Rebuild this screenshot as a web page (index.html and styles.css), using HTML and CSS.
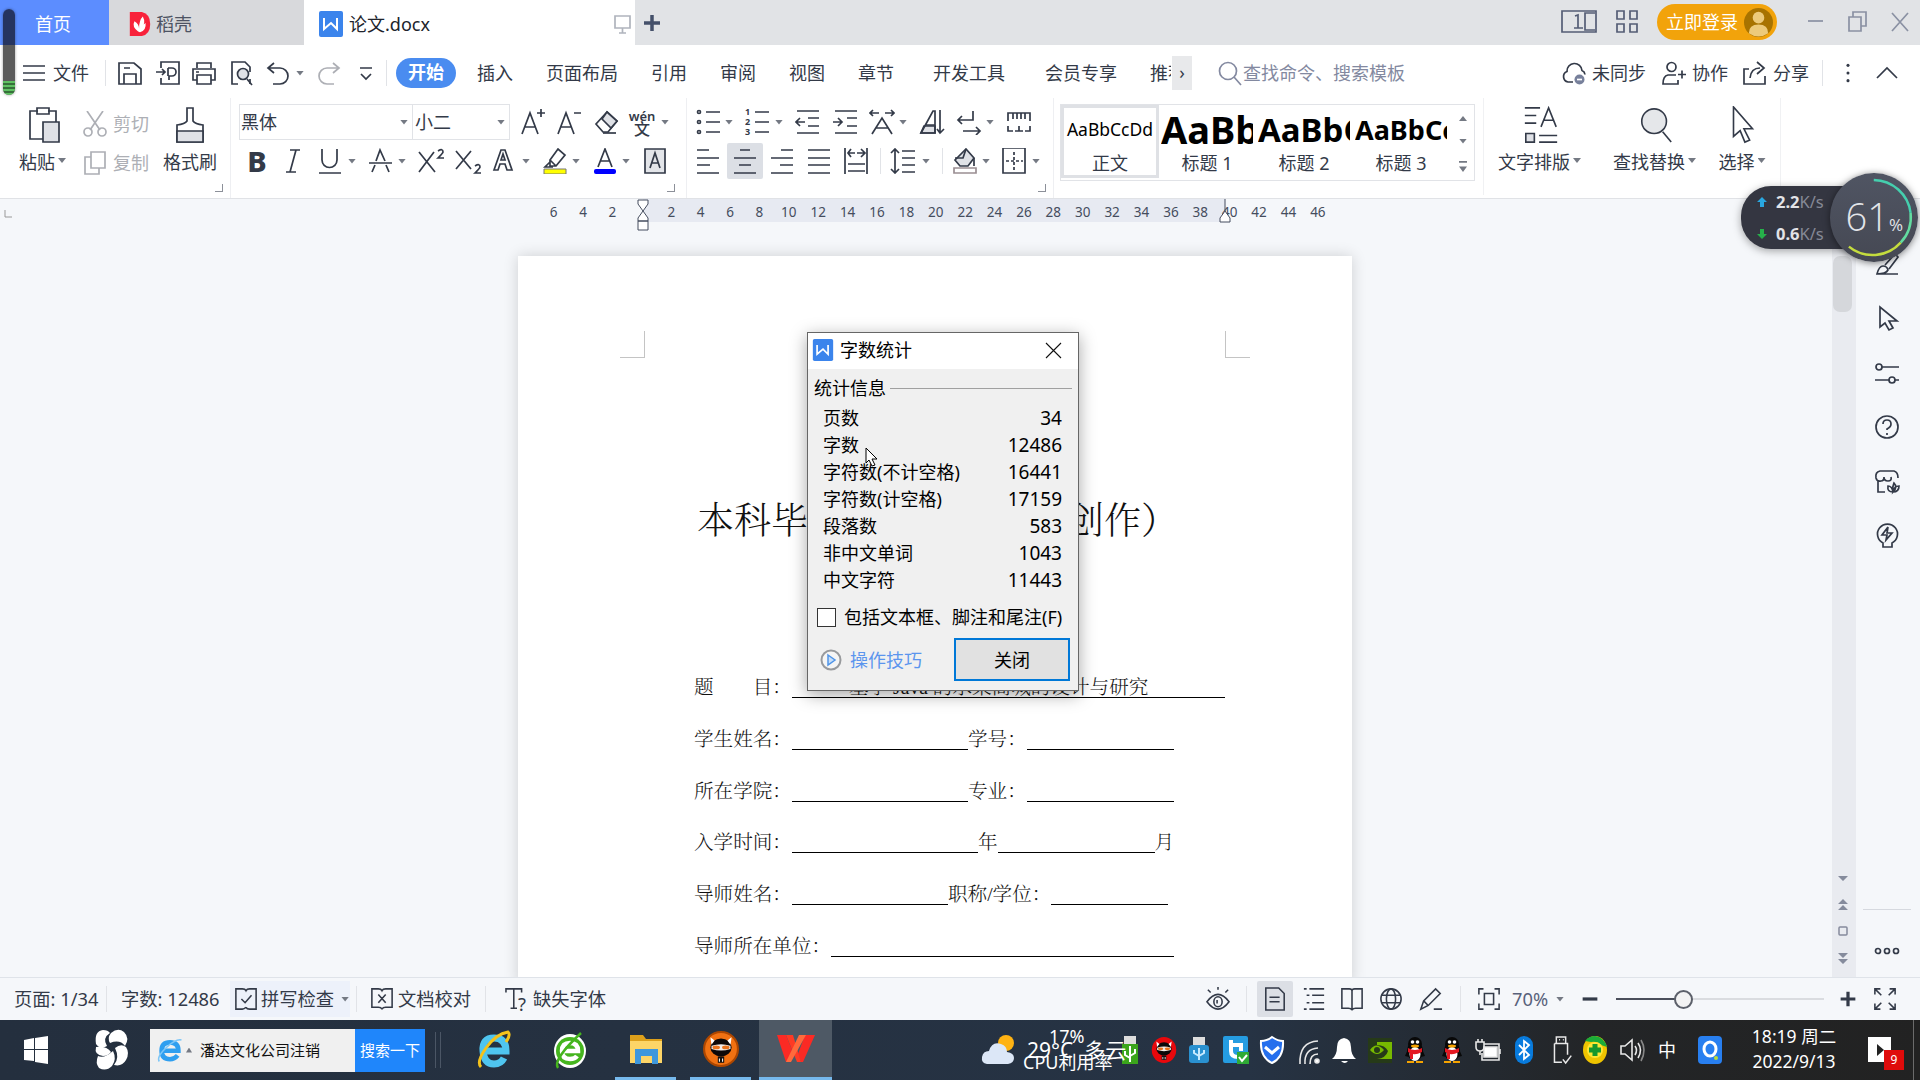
FILE: index.html
```
<!doctype html>
<html lang="zh-CN">
	<head>
		<meta charset="utf-8" />
		<title>论文.docx</title>
		<link rel="stylesheet" href="styles.css">
	</head>

	<body>
		<!-- icon sprite -->
		<svg class="sprite">
			<symbol id="menu" viewBox="0 0 26 26"><path d="M2 6h22M2 13h22M2 20h22" /></symbol>
			<symbol id="save" viewBox="0 0 26 26"><path d="M2 3h15l7 6v15H2zM7 24V14h12v10M7 8h6" /></symbol>
			<symbol id="export" viewBox="0 0 26 26"><path d="M5 8V2h18v22H5v-6M0 12h9M6 9l3 3-3 3M12 8h4a4 4 0 0 1 0 8h-3v4M12 8v8" /></symbol>
			<symbol id="print" viewBox="0 0 26 26"><path d="M6 8V3h14v5M6 20H2V9h22v11h-4M6 15h14v9H6zM5 12h3" /></symbol>
			<symbol id="preview" viewBox="0 0 26 26"><path d="M9 24H3V2h13l5 5v5M21 19v5" /><circle cx="14" cy="14" r="5.5" fill="#dfe1e6" /><path d="m18 19 5 6" /></symbol>
			<symbol id="undo" viewBox="0 0 26 26"><path d="M9 3 3 8l6 5M3 8h12a8 8 0 0 1 0 16H8" /></symbol>
			<symbol id="redo" viewBox="0 0 26 26"><path d="m17 3 6 5-6 5M23 8H11a8 8 0 0 0 0 16h7" /></symbol>
			<symbol id="more" viewBox="0 0 26 26"><path d="M7 8h12M8 14l5 5 5-5" /></symbol>
			<symbol id="search" viewBox="0 0 26 26"><circle cx="11" cy="11" r="8.5" /><path d="m17 17 7 8" /></symbol>
			<symbol id="cloud" viewBox="0 0 26 26"><path d="M12 22H7a5.500 5.500 0 0 1-1-10.500 7.500 7.500 0 0 1 15-1 5 5 0 0 1 3 4" /><circle cx="18.500" cy="19.500" r="5" fill="#77809b" stroke="none" /><path d="M16 19.500h5" stroke="#fff" /></symbol>
			<symbol id="person" viewBox="0 0 26 26"><circle cx="10.500" cy="7" r="4.500" /><path d="M15 15H7q-5 1-5 9h15v-4M17 14.500h8M21 10.500v8" /></symbol>
			<symbol id="share" viewBox="0 0 26 26"><path d="M7 9H2v15h21v-8M8 18Q9 8 18 8M15 2l7 6-7 6" /></symbol>
			<symbol id="dots" viewBox="0 0 26 26"><g fill="currentColor" stroke="none"><circle cx="13" cy="4" r="1.800" /><circle cx="13" cy="13" r="1.800" /><circle cx="13" cy="22" r="1.800" /></g></symbol>
			<symbol id="caret" viewBox="0 0 26 26"><path d="M3 18 13 8l10 10" /></symbol>
			<symbol id="paste" viewBox="0 0 34 38"><path d="M11 5H3v28h13M21 5h8v11" /><path d="M10 2h12v6H10z" /><path fill="#dfe1e6" d="M16 16h16v20H16z" /></symbol>
			<symbol id="cut" viewBox="0 0 26 26"><path d="M5 0 18 19M21 0 8 19" /><circle cx="6" cy="21" r="4" /><circle cx="20" cy="21" r="4" /></symbol>
			<symbol id="copy" viewBox="0 0 26 26"><path d="M9 2h14v16H9zM9 7H3v17h14v-6" /></symbol>
			<symbol id="brush" viewBox="0 0 34 38"><path d="M14 2h6v13q2 3 10 4v17H4V19q8-1 10-4z" /><path fill="#dfe1e6" d="M4 25h26v11H4z" /></symbol>
			<symbol id="font-up" viewBox="0 0 26 26"><path d="M3 25 11 4l8 21M6 18h10M18 4h8M22 0v8" /></symbol>
			<symbol id="font-down" viewBox="0 0 26 26"><path d="M3 25 11 4l8 21M6 18h10M19 4h7" /></symbol>
			<symbol id="eraser" viewBox="0 0 26 26"><path d="M14 3 3 15l7 8h5l9-11z" /><path fill="#dfe1e6" d="m14 3 10 9-6 7-9-9z" /><path d="M10 24h13" /></symbol>
			<symbol id="italic" viewBox="0 0 26 26"><path d="M10 2h10M6 24h10M16 2 10 24" /></symbol>
			<symbol id="underline" viewBox="0 0 26 26"><path d="M5 1v11a7 7 0 0 0 15 0V1M2 25h22" /></symbol>
			<symbol id="strike" viewBox="0 0 26 26"><path d="M2 15h23M5 24l3-7M9 13l4-11 5 11M19 17l3 7" /></symbol>
			<symbol id="sup" viewBox="0 0 26 26"><path d="M1 4 17 24M16 4 1 24M20 3q5-3 5 1 0 1-5 6h6" /></symbol>
			<symbol id="sub" viewBox="0 0 26 26"><path d="M1 3 16 21M16 3 1 21M20 18q5-3 5 1 0 1-5 6h6" /></symbol>
			<symbol id="glow" viewBox="0 0 26 26"><path d="M3 22 10 2h4l7 20h-5l-2-6h-5l-2 6zM10 12l2-6 2 6z" /></symbol>
			<symbol id="marker" viewBox="0 0 26 26"><path d="M8 12 16 1l7 6-9 11H8zM8 12l6 6M8 14l-5 5h8" /><path fill="#ff0" stroke="#777" stroke-width="1" d="M2 21h22v5H2z" /></symbol>
			<symbol id="color" viewBox="0 0 26 26"><path d="M6 19 13 1l7 18M8 13h10" /><rect x="2" y="21" width="22" height="5" rx="2" fill="#00f" stroke="none" /></symbol>
			<symbol id="charbox" viewBox="0 0 26 26"><path fill="#e3e5e9" d="M3 1h20v24H3z" /><path d="m8 20 5-15 5 15M10 15h6" /></symbol>
			<symbol id="bullets" viewBox="0 0 26 26"><circle cx="3" cy="3" r="1.500" /><circle cx="3" cy="13" r="1.500" /><circle cx="3" cy="23" r="1.500" /><path d="M10 3h14M10 13h14M10 23h14" /></symbol>
			<symbol id="numbers" viewBox="0 0 26 26"><path d="M10 3h14M10 13h14M10 23h14" /><g fill="currentColor" stroke="none" font-size="9" font-weight="700"><text x="0" y="6">1</text><text x="0" y="16">2</text><text x="0" y="26">3</text></g></symbol>
			<symbol id="outdent" viewBox="0 0 26 26"><path d="M2 2h22M13 9h11M13 17h11M2 24h22M1 13h9M5 9l-4 4 4 4" /></symbol>
			<symbol id="indent" viewBox="0 0 26 26"><path d="M2 2h22M14 9h10M14 17h10M2 24h22M0 13h9M5 9l4 4-4 4" /></symbol>
			<symbol id="charwidth" viewBox="0 0 26 26"><path d="M3 25 13 9l10 16M7 19h12M1 4h9M4 1 1 4l3 3M16 4h9M22 1l3 3-3 3" /></symbol>
			<symbol id="sort" viewBox="0 0 26 26"><path fill="#dfe1e6" d="M5 17h11v7H2z" /><path d="M2 24 14 2h2v22zM7 16h9M21 1v22M18 20l3 4 4-4" /></symbol>
			<symbol id="wrap" viewBox="0 0 26 26"><path d="M17 2v9H2M6 7l-4 4 4 4M7 22h17M20 18l4 4-4 4" /></symbol>
			<symbol id="tabs" viewBox="0 0 26 26"><path d="M2 12V4h22v8M7 4v6M11 4v6M15 4v6M19 4v6M2 17v5h5M24 17v5h-5M9 22h8M13 17v5" /></symbol>
			<symbol id="left" viewBox="0 0 26 26"><path d="M2 2h12M2 10h22M2 17h13M2 25h22" /></symbol>
			<symbol id="center" viewBox="0 0 26 26"><path d="M8 2h10M2 10h22M7 17h12M2 25h22" /></symbol>
			<symbol id="right" viewBox="0 0 26 26"><path d="M12 2h12M2 10h22M11 17h13M2 25h22" /></symbol>
			<symbol id="justify" viewBox="0 0 26 26"><path d="M2 2h22M2 10h22M2 17h22M2 25h22" /></symbol>
			<symbol id="spread" viewBox="0 0 26 26"><path d="M2 0v26M24 0v26M6 5h6M8 1 5 5l3 4M14 5h7M18 1l4 4-4 4M5 16h17M5 23h17" /></symbol>
			<symbol id="spacing" viewBox="0 0 26 26"><path d="M5 1v24M1 5l4-4 4 4M1 21l4 4 4-4M12 3h13M12 10h13M12 17h13M12 24h13" /></symbol>
			<symbol id="bucket" viewBox="0 0 26 26"><path fill="#dfe1e6" d="m6 9 8-8 8 9-6 8H8l-5-6z" /><path d="M3 10h8l3-9M22 10v8" /><path stroke="#9b8f93" d="M2 20h22v5H2z" /></symbol>
			<symbol id="borders" viewBox="0 0 26 26"><path d="M2 0h22v25H2z" /><path stroke-dasharray="3 2" d="M13 4v19M5 13h17" /></symbol>
			<symbol id="layout" viewBox="0 0 34 40"><path d="M0 2h16M0 10h12M0 18h12M17 22 25 2l8 20M20 15h11M15 31h19M15 38h19" /><path fill="#dfe1e6" d="M1 29h9v9H1z" /></symbol>
			<symbol id="find" viewBox="0 0 34 40"><circle cx="15" cy="16" r="13" fill="#e5e7ea" /><path d="m24 27 9 11" /></symbol>
			<symbol id="pointer" viewBox="0 0 26 40"><path d="M3 1v31l7-6 5 12 5-2-6-12h9z" /></symbol>
			<symbol id="spell" viewBox="0 0 26 26"><path d="M13 22q-2 2-4 2H2V2h7q3 0 4 2 1-2 4-2h7v22h-7q-3 0-4-2M8 13l4 4 7-8" /></symbol>
			<symbol id="proof" viewBox="0 0 26 26"><path d="M13 24q-1-2-4-2H2V2h7q3 0 4 2 1-2 4-2h7v20h-7q-3 0-4 2M9 8l8 9M17 8l-8 9" /></symbol>
			<symbol id="missing" viewBox="0 0 26 26"><path d="M1 6V2h17v4M9.500 2v21M6 23h7" /><text x="14" y="26" font-size="20" fill="currentColor" stroke="none">?</text></symbol>
			<symbol id="eye" viewBox="0 0 26 26"><path d="M1 16q12-16 24 0-12 16-24 0zM13 0v3M2 3l3 3M24 3l-3 3" /><ellipse cx="13" cy="16" rx="4.500" ry="5.500" /><path d="M12 14v4" /></symbol>
			<symbol id="doc" viewBox="0 0 26 26"><path d="M3 1h14l6 6v18H3zM7 11h11M7 16h11" /></symbol>
			<symbol id="outline" viewBox="0 0 26 26"><path d="M2 2h3M8 2h16M5 9h3M11 9h13M5 17h3M11 17h13M2 24h3M8 24h16" /></symbol>
			<symbol id="book" viewBox="0 0 26 26"><path d="M13 25q-1-2-4-2H2V2h8q3 0 3 2v21q1-2 4-2h7V2h-8q-3 0-3 2" /></symbol>
			<symbol id="globe" viewBox="0 0 26 26"><circle cx="13" cy="13" r="11" /><ellipse cx="13" cy="13" rx="5" ry="11" /><path d="M3 9h20M3 17h20" /></symbol>
			<symbol id="pen" viewBox="0 0 26 26"><path d="m2 24 3-9L18 2l5 5L10 20zM5 15l5 5M16 24h9" /></symbol>
			<symbol id="fit" viewBox="0 0 26 26"><path d="M2 8V2h5M19 2h5v6M24 18v6h-5M7 24H2v-6M8 7h10v12H8z" /></symbol>
			<symbol id="minus" viewBox="0 0 26 26"><path stroke-width="3.500" d="M5 13h16" /></symbol>
			<symbol id="plus" viewBox="0 0 26 26"><path stroke-width="3.500" d="M5 13h16M13 5v16" /></symbol>
			<symbol id="full" viewBox="0 0 26 26"><path d="M2 8V2h6M2 2l7 7M18 2h6v6M24 2l-7 7M24 18v6h-6M24 24l-7-7M8 24H2v-6M2 24l7-7" /></symbol>
			<symbol id="wps-doc" viewBox="0 0 26 26"><rect x="1" y="0" width="24" height="26" rx="2" fill="#3b84ec" stroke="none" /><path fill="none" stroke="#fff" stroke-width="2" d="M6 7v11l7-6 6 6V7" /></symbol>
			<symbol id="penguin" viewBox="0 0 26 28"><g stroke="none"><ellipse cx="13" cy="15" rx="8" ry="10" fill="#080808" /><circle cx="13" cy="8" r="7" fill="#080808" /><path fill="#080808" d="m6 13-3 7 4 1zM20 13l3 7-4 1z" /><ellipse cx="13" cy="18" rx="5.500" ry="7" fill="#fff" /><path fill="#e31822" d="M6 12q7 4 14 0v4q-6 3-9 2v5H8v-6l-2-1z" /><circle cx="10.500" cy="6" r="1.800" fill="#fff" /><circle cx="15.500" cy="6" r="1.800" fill="#fff" /><ellipse cx="13" cy="10" rx="4" ry="1.500" fill="#f5a300" /><path fill="#f5a300" d="M5 25h7v2H5zM14 25h7v2h-7z" /></g></symbol>
			<symbol id="ninja" viewBox="0 0 34 34"><g stroke="none"><ellipse cx="17" cy="15.500" rx="10" ry="8.500" fill="#0c0909" /><path fill="#fff" d="m7 6 4 3-3 4zM27 6l-4 3 3 4z" /><path fill="#f2ece8" d="M8 14q9-3 18 0v3q-9 3-18 0z" /><ellipse cx="12.500" cy="15.500" rx="3.500" ry="1.800" fill="#e8731c" /><ellipse cx="21.500" cy="15.500" rx="3.500" ry="1.800" fill="#e8731c" /><path fill="#111" d="M14 24h6v6h-6z" /><path fill="#fff" d="M15 26h1v3h-1zM18 26h1v3h-1z" /></g></symbol>
		</svg>

		<div class="tabbar">
			<div class="tab home">首页</div>
			<div class="tab docer">
				<svg class="icon" viewBox="0 0 26 28"><path fill="#f8223b" stroke="none" d="M2 1h13q9 2 9 13t-9 13H2z" /><path fill="#fff" stroke="none" d="M11 22Q4 17 7 11q5 3 5 8 0-9 4-13 4 7-2 13 1-4 5-6 1 8-6 10z" /></svg>
				稻壳
			</div>
			<div class="tab active">
				<svg class="icon"><use href="#wps-doc" /></svg>
				<span class="filename">论文.docx</span>
				<svg class="icon screen" viewBox="0 0 26 26"><path d="M6 5h15v12H6zM13.500 17v5M10 22h7" /></svg>
			</div>
			<svg class="icon newtab"><use href="#plus" /></svg>
			<div class="window-buttons">
				<svg class="icon wide" viewBox="0 0 36 26"><path d="M1 2h34v21H1zM14 7l3-1v13M13 19h9M34 4h-10v17h10" /></svg>
				<svg class="icon" viewBox="0 0 26 26"><path d="M3 2h7v8H3zM16 2h7v8h-7zM3 15h7v8H3zM16 15h7v8h-7z" /></svg>
				<div class="login">
					立即登录
					<svg viewBox="0 0 30 30"><circle cx="15" cy="15" r="15" fill="#a87300" /><circle cx="15" cy="10" r="6" fill="#edca7a" /><path fill="#edca7a" d="M5 26q0-9 10-9t10 9q-10 7-20 0z" /></svg>
				</div>
				<i class="sep"></i>
				<svg class="icon dim" viewBox="0 0 26 26"><path d="M6 12h15" /></svg>
				<svg class="icon dim" viewBox="0 0 26 26"><path d="M4 8h12v14H4zM8 8V3h13v14h-5" /></svg>
				<svg class="icon dim" viewBox="0 0 26 26"><path d="m5 4 16 18M21 4 5 22" /></svg>
			</div>
		</div>

		<div class="menubar">
			<svg class="icon"><use href="#menu" /></svg>
			<span>文件</span>
			<i class="sep"></i>
			<svg class="icon"><use href="#save" /></svg>
			<svg class="icon"><use href="#export" /></svg>
			<svg class="icon"><use href="#print" /></svg>
			<svg class="icon"><use href="#preview" /></svg>
			<svg class="icon"><use href="#undo" /></svg>
			<i class="arrow"></i>
			<svg class="icon off"><use href="#redo" /></svg>
			<svg class="icon"><use href="#more" /></svg>
			<i class="sep"></i>
			<span class="pill">开始</span>
			<span>插入</span>
			<span>页面布局</span>
			<span>引用</span>
			<span>审阅</span>
			<span>视图</span>
			<span>章节</span>
			<span>开发工具</span>
			<span>会员专享</span>
			<span class="cropped">推荐</span>
			<span class="scroll-right">›</span>
			<svg class="icon hint"><use href="#search" /></svg>
			<span class="hint">查找命令、搜索模板</span>
			<svg class="icon"><use href="#cloud" /></svg>
			<span>未同步</span>
			<svg class="icon"><use href="#person" /></svg>
			<span>协作</span>
			<svg class="icon"><use href="#share" /></svg>
			<span>分享</span>
			<i class="sep"></i>
			<svg class="icon small"><use href="#dots" /></svg>
			<svg class="icon"><use href="#caret" /></svg>
		</div>

		<div class="ribbon">
			<div class="group clipboard">
				<div class="big">
					<svg><use href="#paste" /></svg>
					<span>粘贴<i class="arrow"></i></span>
				</div>
				<div class="stack off">
					<div><svg class="icon"><use href="#cut" /></svg>剪切</div>
					<div><svg class="icon"><use href="#copy" /></svg>复制</div>
				</div>
				<div class="big">
					<svg><use href="#brush" /></svg>
					<span>格式刷</span>
				</div>
			</div>

			<div class="group font">
				<div class="row first">
					<div class="combos">
						<span>黑体<i class="arrow"></i></span>
						<span>小二<i class="arrow"></i></span>
					</div>
					<svg class="icon"><use href="#font-up" /></svg>
					<svg class="icon"><use href="#font-down" /></svg>
					<svg class="icon"><use href="#eraser" /></svg>
					<span class="pinyin"><b>wén</b><b>文</b></span>
					<i class="arrow"></i>
				</div>
				<div class="row second">
					<b class="bold">B</b>
					<svg class="icon"><use href="#italic" /></svg>
					<svg class="icon"><use href="#underline" /></svg>
					<i class="arrow"></i>
					<svg class="icon"><use href="#strike" /></svg>
					<i class="arrow"></i>
					<svg class="icon"><use href="#sup" /></svg>
					<svg class="icon"><use href="#sub" /></svg>
					<svg class="icon"><use href="#glow" /></svg>
					<i class="arrow"></i>
					<svg class="icon"><use href="#marker" /></svg>
					<i class="arrow"></i>
					<svg class="icon"><use href="#color" /></svg>
					<i class="arrow"></i>
					<svg class="icon"><use href="#charbox" /></svg>
				</div>
			</div>

			<div class="group paragraph">
				<div class="row first">
					<svg class="icon"><use href="#bullets" /></svg>
					<i class="arrow"></i>
					<svg class="icon"><use href="#numbers" /></svg>
					<i class="arrow"></i>
					<svg class="icon"><use href="#outdent" /></svg>
					<svg class="icon"><use href="#indent" /></svg>
					<svg class="icon"><use href="#charwidth" /></svg>
					<i class="arrow"></i>
					<svg class="icon"><use href="#sort" /></svg>
					<svg class="icon"><use href="#wrap" /></svg>
					<i class="arrow"></i>
					<svg class="icon"><use href="#tabs" /></svg>
				</div>
				<div class="row second">
					<svg class="icon"><use href="#left" /></svg>
					<span class="pressed"><svg class="icon"><use href="#center" /></svg></span>
					<svg class="icon"><use href="#right" /></svg>
					<svg class="icon"><use href="#justify" /></svg>
					<svg class="icon"><use href="#spread" /></svg>
					<i class="sep"></i>
					<svg class="icon"><use href="#spacing" /></svg>
					<i class="arrow"></i>
					<i class="sep"></i>
					<svg class="icon"><use href="#bucket" /></svg>
					<i class="arrow"></i>
					<svg class="icon"><use href="#borders" /></svg>
					<i class="arrow"></i>
				</div>
			</div>

			<div class="styles">
				<div class="style selected"><b>AaBbCcDd</b><span>正文</span></div>
				<div class="style h1"><b>AaBbC</b><span>标题 1</span></div>
				<div class="style h2"><b>AaBbCc</b><span>标题 2</span></div>
				<div class="style h3"><b>AaBbCc</b><span>标题 3</span></div>
				<div class="style-nav">
					<i class="arrow up"></i>
					<i class="arrow"></i>
					<i class="arrow expand"></i>
				</div>
			</div>

			<div class="tools">
				<div class="big">
					<svg><use href="#layout" /></svg>
					<span>文字排版<i class="arrow"></i></span>
				</div>
				<div class="big">
					<svg><use href="#find" /></svg>
					<span>查找替换<i class="arrow"></i></span>
				</div>
				<div class="big">
					<svg><use href="#pointer" /></svg>
					<span>选择<i class="arrow"></i></span>
				</div>
			</div>
		</div>

		<div class="workspace">
			<div class="canvas">
				<div class="ruler">
					<span>6</span><span>4</span><span>2</span><span></span><span>2</span><span>4</span><span>6</span><span>8</span><span>10</span><span>12</span><span>14</span><span>16</span><span>18</span><span>20</span><span>22</span><span>24</span><span>26</span><span>28</span><span>30</span><span>32</span><span>34</span><span>36</span><span>38</span><span>40</span><span>42</span><span>44</span><span>46</span>
					<svg class="indent-left" viewBox="0 0 12 32"><path d="M1 1h10v4L6 12 1 5zM6 12l5 7v3H1v-3zM1 22h10v9H1z" /></svg>
					<svg class="indent-right" viewBox="0 0 12 24"><path d="M6 0v12l5 7v4H1v-4l5-7" /></svg>
					<svg class="tabstop" viewBox="0 0 8 8"><path d="M1 0v7h7" /></svg>
				</div>

				<div class="page">
					<div class="corners"><i></i><i></i></div>
					<h1>本科毕业论文（设计、创作）</h1>
					<div class="cover">
						<p>题　　目：<u class="topic">基于 <b>Java</b> 的水果商城的设计与研究</u></p>
						<p>学生姓名：<u class="w176"></u>学号：<u class="w147"></u></p>
						<p>所在学院：<u class="w176"></u>专业：<u class="w147"></u></p>
						<p>入学时间：<u class="w186"></u>年<u class="w157"></u>月</p>
						<p>导师姓名：<u class="w156"></u>职称/学位：<u class="w117"></u></p>
						<p>导师所在单位：<u class="w343"></u></p>
					</div>
				</div>
			</div>

			<div class="scrollbar">
				<div class="thumb"></div>
				<svg viewBox="0 0 24 100"><path fill="#858b9c" d="M6 3h10l-5 5zM6 31l5-5 5 5zM6 37l5-5 5 5zM6 80h10l-5 5zM6 86h10l-5 5z" /><rect x="7" y="54" width="8" height="8" rx="1" fill="none" stroke="#858b9c" stroke-width="1.500" /></svg>
			</div>

			<div class="sidebar">
				<svg class="icon" viewBox="0 0 26 26"><path d="M11 13 21 2l3 3-9 12M3 22h21M3 22q2-8 6-8t5 4q-2 4-11 4z" /></svg>
				<svg class="icon" viewBox="0 0 26 26"><path d="M6 1v20l5-4 4 7 4-2-4-7h8z" /></svg>
				<svg class="icon" viewBox="0 0 26 26"><circle cx="5" cy="7" r="3" /><circle cx="18" cy="20" r="3" /><path d="M8 7h17M1 20h14M21 20h4" /></svg>
				<svg class="icon" viewBox="0 0 26 26"><circle cx="13" cy="13" r="11" /><path d="M9 10q0-4 4-4t4 4q0 3-4 5v1M13 19v2" /></svg>
				<svg class="icon" viewBox="0 0 26 26"><path d="M24 10q0-6-4-7H6Q1 4 2 10q1 4 5 3 3 0 3-4 0 4 4 4 4 0 3-4M4 13v11h7M14 18q4 0 5 6-6 0-5-6zM19 24q-1-5 1-9 4 4-1 9 1-6 6-6 0 6-6 6z" /></svg>
				<svg class="icon" viewBox="0 0 26 26"><path d="M9 25v-4A10 10 0 1 1 18 21v4zM14 5l-6 8h5l-1 5 6-7h-5z" /></svg>
				<i class="rule"></i>
				<svg class="icon" viewBox="0 0 26 26"><circle cx="4" cy="13" r="2.500" /><circle cx="13" cy="13" r="2.500" /><circle cx="22" cy="13" r="2.500" /></svg>
			</div>
		</div>

		<div class="statusbar">
			<span>页面: 1/34</span>
			<i class="sep"></i>
			<span>字数: 12486</span>
			<span class="spell"><svg class="icon"><use href="#spell" /></svg>拼写检查<i class="arrow"></i></span>
			<i class="sep"></i>
			<svg class="icon"><use href="#proof" /></svg>
			<span>文档校对</span>
			<i class="sep"></i>
			<svg class="icon"><use href="#missing" /></svg>
			<span>缺失字体</span>
			<svg class="icon"><use href="#eye" /></svg>
			<i class="sep"></i>
			<span class="pressed"><svg class="icon"><use href="#doc" /></svg></span>
			<svg class="icon"><use href="#outline" /></svg>
			<svg class="icon"><use href="#book" /></svg>
			<svg class="icon"><use href="#globe" /></svg>
			<svg class="icon"><use href="#pen" /></svg>
			<i class="sep"></i>
			<svg class="icon"><use href="#fit" /></svg>
			<span class="zoom">70%</span>
			<i class="arrow"></i>
			<svg class="icon"><use href="#minus" /></svg>
			<div class="slider"><i></i></div>
			<svg class="icon"><use href="#plus" /></svg>
			<svg class="icon"><use href="#full" /></svg>
		</div>

		<div class="taskbar">
			<svg class="app" viewBox="0 0 34 34"><path fill="#fff" d="m5 7 10-2v11H5zM16 5l13-2v13H16zM5 17h10v11L5 27zM16 17h13v14l-13-2z" /></svg>
			<svg class="app" viewBox="0 0 34 40"><g fill="#fff"><path d="M2 14Q0 1 9 0q5 0 7 3Q8 8 13 16 6 20 2 14z" /><path d="M17 3q7-6 13-1 6 6 1 14-5-7-15-3-3-5 1-10z" /><path d="M32 17q4 6 0 13-4 7-12 5 6-7 1-17 6-5 11-1z" /><path d="M19 21q4 8-1 15-6 6-13 2-4-5-1-12 6 3 15-5z" /><path d="M2 17q-2 8 7 9 5 0 8-4-4-6-15-5z" /></g></svg>
			<div class="search">
				<svg viewBox="0 0 34 34"><path fill="none" stroke="#2f9ff0" stroke-width="6" d="M7 18h21q0-11-11-11T6 18t11 11q6 0 10-5" /><path fill="none" stroke="#7cc6f7" stroke-width="2" d="M3 32Q-1 26 12 14T32 4" /></svg>
				<i class="arrow up"></i>
				<span>潘达文化公司注销</span>
				<button>搜索一下</button>
			</div>
			<i class="handle"></i>
			<svg class="app" viewBox="0 0 34 40"><path fill="none" stroke="#4fc5ef" stroke-width="7" d="M8 21h21q0-13-12-13T6 21t11 13q7 0 10-6" /><path fill="none" stroke="#f4c21b" stroke-width="3" d="M4 37Q-1 32 9 18T31 2q3 3-2 10" /></svg>
			<svg class="app" viewBox="0 0 34 40"><ellipse cx="17" cy="21" rx="16" ry="17" fill="#fff" /><circle cx="17" cy="21" r="14" fill="#45b51e" /><path fill="none" stroke="#fff" stroke-width="4.500" d="M9 21h16q0-8-8-8t-8 8 8 8q5 0 7-3" /><path fill="none" stroke="#45b51e" stroke-width="2.500" d="M5 38Q2 34 8 25T28 3" /></svg>
			<div class="running">
				<svg class="app" viewBox="0 0 34 34"><path fill="#dda01b" d="M1 3h13l3 4h16v6H1z" /><path fill="#fdd567" d="M1 9h32v22H1z" /><path fill="#3e97dc" d="M6 17h23v15h-6v-8H12v8H6z" /></svg>
			</div>
			<div class="running">
				<svg class="app ninja-app" viewBox="0 0 34 34"><circle cx="17" cy="17" r="16" fill="#f07112" stroke="#ad4700" stroke-width="2" /><use href="#ninja" /></svg>
			</div>
			<div class="running current">
				<svg class="wps-app" viewBox="0 0 38 28"><path fill="#fb2a24" d="M0 0h9l6 15-4 12h-2zM28 0h10L26 27h-2l-3-8z" /><path fill="#fd3a24" d="M9 0h7l8 27h-4z" /><path fill="#ff6a3c" d="M22 0h7L14 27H9z" /></svg>
			</div>
			<svg class="app" viewBox="0 0 34 34"><circle cx="25" cy="10" r="8" fill="#ffb313" /><path fill="#dce7f7" d="M6 31q-6-1-5-7t7-6q3-10 12-7 6 2 6 8 7 1 7 6t-6 6z" /></svg>
			<div class="weather"><span>17%</span><span>29°C&nbsp; 多云</span><span>CPU利用率</span></div>
			<svg class="tray" viewBox="0 0 26 28"><path fill="#ddd" d="M8 0h12v8H8z" /><path fill="#3ba51c" d="M6 8h16v20H6z" /><path fill="none" stroke="#fff" stroke-width="2" d="M14 10v16M9 15v4l5 3M19 13v4l-5 3" /></svg>
			<svg class="tray" viewBox="0 0 34 34"><ellipse cx="17" cy="17" rx="16" ry="17" fill="#e9080c" /><use href="#ninja" /></svg>
			<svg class="tray" viewBox="0 0 26 28"><path fill="#ddd" d="M7 1h12v9H7z" /><rect x="3" y="9" width="20" height="18" rx="3" fill="#2a91d0" /><path fill="none" stroke="#c8eaff" stroke-width="2" d="M13 12v12M8 14v3l5 3M18 14v3l-5 3" /></svg>
			<svg class="tray" viewBox="0 0 26 28"><rect width="25" height="27" rx="2" fill="#259ce1" /><path fill="none" stroke="#fff" stroke-width="4" d="M8 4v11q0 6 7 6M7 9h11v6" /><path fill="#2faa35" d="M14 16h12v12H14z" /><path fill="none" stroke="#fff" stroke-width="2" d="m16 21 3 4 5-6" /></svg>
			<svg class="tray" viewBox="0 0 26 28"><path fill="#256fed" stroke="#fff" stroke-width="2" d="M13 1q6 4 11 4 1 16-11 22Q1 21 2 5q6 0 11-4z" /><path fill="none" stroke="#fff" stroke-width="3" d="m6 11 7 6 7-6" /></svg>
			<svg class="tray line" viewBox="0 0 26 28"><path d="M4 28Q3 6 22 5M9 28Q8 13 22 12M14 28q0-10 8-10" /><circle cx="21" cy="25" r="2" fill="#fff" /></svg>
			<svg class="tray" viewBox="0 0 26 28"><path fill="#fff" d="M13 2q7 1 7 9t5 12H1q5-4 5-12t7-9zM10 25h7q-3 4-7 0z" /></svg>
			<svg class="tray" viewBox="0 0 26 28"><path fill="#263a18" d="M1 2h24v25H1z" /><path fill="#77b900" d="M10 6h15v17H10q9-1 11-8Q18 9 10 9zM3 14q6-9 14 0-7 8-14 0z" /><circle cx="10" cy="14" r="3" fill="#263a18" /></svg>
			<svg class="tray"><use href="#penguin" /></svg>
			<svg class="tray"><use href="#penguin" /></svg>
			<svg class="tray line" viewBox="0 0 26 28"><path fill="#fff" d="M9 11h13v10H9z" /><path d="M9 8h15v16H7v-7M25 13v5M1 6v5q0 4 4 4t4-4V6zM3 3v3M7 3v3M5 15v4" /></svg>
			<svg class="tray" viewBox="0 0 26 28"><rect x="4" y="0" width="18" height="28" rx="9" fill="#087bdd" /><path fill="none" stroke="#fff" stroke-width="1.800" d="m8 9 10 10-5 4V5l5 4L8 19" /></svg>
			<svg class="tray line" viewBox="0 0 26 30"><path d="M8 1h10v7H8zM6 8h14v12M6 8v20h8M15 25l3 4 6-8M11 4h1M15 4h1" /></svg>
			<svg class="tray" viewBox="0 0 26 28"><ellipse cx="13" cy="14" rx="12" ry="14" fill="#efc400" /><path fill="#1bac38" d="M13 0q9 1 12 11l-6-2Q16 5 9 6L3 5q4-5 10-5z" /><circle cx="13" cy="14" r="8" fill="#fde735" /><path stroke="#17982c" stroke-width="5" d="M13 8v12M7 14h12" /></svg>
			<svg class="tray line" viewBox="0 0 26 28"><path d="M2 10h4l7-6v20l-7-6H2zM16 10q3 4 0 9M19 7q5 7 0 15" /><path stroke="#888" d="M22 4q6 10 0 21" /></svg>
			<span class="ime">中</span>
			<svg class="tray" viewBox="0 0 26 28"><rect x="1" width="24" height="28" rx="4" fill="#287ff0" /><ellipse cx="13" cy="13" rx="6" ry="7" fill="none" stroke="#fff" stroke-width="3" /><circle cx="19" cy="22" r="2" fill="#bcdc36" /></svg>
			<div class="clock">18:19 周二<br />2022/9/13</div>
			<div class="notice">
				<svg viewBox="0 0 26 26"><path fill="#fff" d="M1 0h23v25H1z" /><path fill="#222" d="m10 7 7 6-7 6z" /></svg>
				<span>9</span>
			</div>
			<i class="edge"></i>
		</div>

		<!-- word count dialog -->
		<div class="dialog">
			<div class="dialog-title">
				<svg viewBox="0 0 26 26"><use href="#wps-doc" /></svg>
				字数统计
				<svg class="close" viewBox="0 0 16 16"><path d="m0 0 16 16M16 0 0 16" /></svg>
			</div>
			<div class="dialog-body">
				<div class="legend">统计信息</div>
				<dl>
					<dt>页数</dt><dd>34</dd>
					<dt>字数</dt><dd>12486</dd>
					<dt>字符数(不计空格)</dt><dd>16441</dd>
					<dt>字符数(计空格)</dt><dd>17159</dd>
					<dt>段落数</dt><dd>583</dd>
					<dt>非中文单词</dt><dd>1043</dd>
					<dt>中文字符</dt><dd>11443</dd>
				</dl>
				<div class="option"><i></i>包括文本框、脚注和尾注(F)</div>
				<div class="dialog-foot">
					<svg viewBox="0 0 22 22"><circle cx="11" cy="11" r="9.500" fill="#f5f5f5" stroke="#989a9d" stroke-width="2" /><path fill="#c9dff8" stroke="#4f94e8" stroke-width="1.500" d="m8 6 7 5-7 5z" /></svg>
					<a>操作技巧</a>
					<button>关闭</button>
				</div>
			</div>
		</div>

		<svg class="cursor" viewBox="0 0 13 20"><path fill="#fff" stroke="#000" d="M1 1v15l3-3 3 6 3-1-3-6h5z" /></svg>

		<div class="battery"><i></i></div>

		<div class="monitor">
			<div class="speeds">
				<div>
					<svg class="up" viewBox="0 0 10 10"><path d="M5 0l5 5H7v5H3V5H0z" /></svg>
					<b>2.2</b>K/s
				</div>
				<div>
					<svg class="down" viewBox="0 0 10 10"><path d="M5 10l5-5H7V0H3v5H0z" /></svg>
					<b>0.6</b>K/s
				</div>
			</div>
			<div class="usage">
				<svg viewBox="0 0 88 88"><path stroke="#45cfae" d="M44 7a38 38 0 0 1 37 33" /><path stroke="#63dca0" d="M81 40a38 38 0 0 1-10 30" /><path stroke="#c4dc3e" d="M71 70a38 38 0 0 1-52 4" /></svg>
				61<small>%</small>
			</div>
		</div>
	</body>
</html>
```
FILE: styles.css
```
:root {
	--ink: #333a48;
	--blue: #4a8cf0;
	--line: #e1e3e7;
	--canvas: #f5f7fa;
}

* {
	box-sizing: border-box;
}

body {
	margin: 0;
	width: 1920px;
	height: 1080px;
	overflow: hidden;
	position: relative;
	display: flex;
	flex-direction: column;
	background: #fff;
	color: var(--ink);
	font-family: "Noto Sans", "Noto Sans CJK SC", sans-serif;
	font-size: 18px;
	line-height: 26px;
	white-space: nowrap;
}

svg {
	display: block;
	flex-shrink: 0;
	overflow: visible;
}

i {
	font-style: normal;
}

.sprite {
	position: absolute;
	width: 0;
	height: 0;
}

.icon {
	width: 26px;
	height: 26px;
	fill: none;
	stroke: currentColor;
	stroke-width: 1.7;
}

.arrow {
	width: 8px;
	height: 5px;
	flex-shrink: 0;
	background: #747983;
	clip-path: polygon(0 0, 100% 0, 50% 100%);
}

.arrow.up {
	clip-path: polygon(0 100%, 100% 100%, 50% 0);
}

.sep {
	width: 1px;
	height: 26px;
	background: var(--line);
}

.off {
	color: #adafb5;
}

/* tabs */
.tabbar {
	display: flex;
	align-items: center;
	height: 45px;
	flex-shrink: 0;
	background: #e1e3e6;
}

.tab {
	height: 45px;
	display: flex;
	align-items: center;
	padding-top: 3px;
}

.home {
	width: 109px;
	padding-left: 35px;
	background: #5c8dff;
	color: #fff;
}

.docer {
	width: 195px;
	padding-left: 18px;
	gap: 3px;
	background: #d8d9dc;
	color: #4d5363;
}

.tab.active {
	width: 331px;
	padding-left: 14px;
	background: #fff;
	color: #20242c;
}

.filename {
	margin-left: 5px;
	width: 260px;
}

.screen {
	color: #b0b4bd;
}

.newtab {
	margin-left: 4px;
	color: #44506a;
}

.window-buttons {
	margin-left: auto;
	height: 45px;
	display: grid;
	grid-template-columns: 53px 43px 132px 13px 43px 42px 33px;
	align-items: center;
	padding-bottom: 1px;
	color: #545d75;
}

.icon.wide {
	width: 36px;
}

.login {
	width: 120px;
	height: 36px;
	padding: 0 4px 0 9px;
	border-radius: 18px;
	background: #f2a30b;
	color: #fff;
	display: flex;
	align-items: center;
	justify-content: space-between;
}

.login svg {
	width: 29px;
}

.dim {
	color: #8a91a3;
}

/* menu */
.menubar {
	display: grid;
	grid-template-columns: 32px 52px 12px 39px 35px 38px 36px 31px 20px 37px 33px 10px 81px 69px 105px 69px 69px 69px 75px 112px 105px 22px 45px 26px 318px 31px 69px 31px 50px 31px 49px 13px 39px 46px;
	align-items: center;
	height: 50px;
	padding: 6px 0 0 21px;
	flex-shrink: 0;
}

.pill {
	width: 60px;
	height: 30px;
	line-height: 29px;
	border-radius: 15px;
	background: var(--blue);
	color: #fff;
	text-align: center;
	font-weight: 700;
}

.cropped {
	width: 21px;
	overflow: hidden;
}

.scroll-right {
	width: 20px;
	height: 34px;
	line-height: 32px;
	background: #e8e9eb;
	text-align: center;
}

.hint {
	color: #8389a0;
}

.small {
	transform: scale(0.85);
}

/* ribbon */
.ribbon {
	display: flex;
	height: 104px;
	padding-top: 3px;
	flex-shrink: 0;
	border-bottom: 1px solid #e0e2e6;
}

.group {
	position: relative;
	padding-top: 6px;
	border-right: 1px solid #eeeff2;
}

/* dialog launcher in the corner of a group */
.group::after {
	content: "";
	position: absolute;
	right: 7px;
	bottom: 6px;
	width: 7px;
	height: 7px;
	border: solid #8c9099;
	border-width: 0 1.5px 1.5px 0;
}

.clipboard {
	width: 231px;
	display: flex;
}

.big {
	display: flex;
	flex-direction: column;
	align-items: center;
}

.big > svg {
	width: 34px;
	height: 38px;
	margin: 2px 0 0 13px;
	fill: none;
	stroke: currentColor;
	stroke-width: 1.7;
}

.big > span {
	margin-top: 5px;
	position: relative;
}

.big .arrow {
	position: absolute;
	left: calc(100% + 3px);
	top: 9px;
}

.clipboard .big:first-child {
	width: 74px;
}

.clipboard .big:last-child {
	width: 80px;
}

.clipboard .big:last-child svg {
	margin-left: 0;
}

.clipboard .stack {
	width: 76px;
	padding-left: 8px;
}

.stack div {
	display: flex;
	align-items: center;
	height: 39px;
	gap: 5px;
}

.font {
	width: 456px;
}

.font::after {
	right: 11px;
}

.paragraph {
	width: 367px;
}

.row {
	display: grid;
	align-items: center;
}

.row.first {
	height: 36px;
}

.row.second {
	height: 42px;
}

.font .first {
	grid-template-columns: 280px 36px 38px 37px 31px 20px;
	padding-left: 8px;
}

.font .second {
	grid-template-columns: 36px 37px 31px 19px 31px 20px 37px 36px 31px 20px 30px 20px 30px 20px 26px;
	padding-left: 13px;
}

.paragraph .first {
	grid-template-columns: 29px 20px 30px 20px 38px 36px 30px 20px 37px 30px 20px 26px;
	padding-left: 9px;
}

.paragraph .second {
	grid-template-columns: 32px 42px 37px 37px 37px 10px 32px 20px 10px 30px 19px 31px 10px;
	padding-left: 8px;
}

.combos {
	width: 271px;
	height: 36px;
	display: grid;
	grid-template-columns: 172px 1fr;
	border: 1px solid var(--line);
}

.combos span {
	display: flex;
	align-items: center;
	justify-content: space-between;
	padding: 0 4px 0 1px;
}

.combos span + span {
	border-left: 1px solid var(--line);
	padding-left: 2px;
}

.pinyin {
	width: 24px;
	display: grid;
	justify-content: center;
	justify-items: center;
	padding-top: 2px;
}

.pinyin b {
	font-size: 13px;
	font-weight: 600;
	line-height: 12px;
}

.pinyin b + b {
	font-size: 16px;
	font-weight: 500;
	line-height: 15px;
}

.bold {
	width: 26px;
	text-align: center;
	font-size: 29px;
	font-weight: 800;
}

.pressed {
	display: grid;
	place-items: center;
	width: 36px;
	height: 36px;
	background: #dcdfe5;
	border-radius: 2px;
}

.styles {
	width: 415px;
	height: 77px;
	margin: 6px 0 0 6px;
	display: grid;
	grid-template-columns: 100px 97px 97px 97px 1fr;
	border: 1px solid var(--line);
}

.style {
	margin-right: 5px;
	display: grid;
	grid-template-rows: 41px 26px;
	justify-items: center;
	overflow: hidden;
	padding-top: 4px;
}

.style b {
	width: 100%;
	overflow: hidden;
	color: #000;
	line-height: 41px;
}

.selected {
	width: 98px;
	height: 73px;
	border: 3px solid #dfe1e5;
	padding-top: 1px;
}

.selected b {
	font-size: 17.5px;
	font-weight: 400;
	text-align: center;
}

.h1 b {
	font-size: 38px;
}

.h2 b {
	font-size: 33px;
}

.h3 b {
	font-size: 27px;
}

.style-nav {
	display: flex;
	flex-direction: column;
	align-items: center;
	padding: 11px 0 8px;
	justify-content: space-between;
}

.expand {
	height: 11px;
	clip-path: polygon(0 0, 100% 0, 100% 15%, 0 15%, 0 50%, 100% 50%, 50% 100%, 0 50%);
}

.tools {
	display: flex;
	height: 97px;
	margin-left: 8px;
	padding: 6px 20px 0 14px;
	border-left: 1px solid #f0f1f3;
	border-right: 1px solid #f0f1f3;
}

.tools .big:nth-child(2) {
	margin-left: 43px;
}

.tools .big:nth-child(3) {
	margin-left: 28px;
}

/* document area */
.workspace {
	display: flex;
	flex: 1;
	min-height: 0;
	background: var(--canvas);
}

.canvas {
	width: 1832px;
	overflow: hidden;
}

.ruler {
	position: relative;
	height: 57px;
	padding-left: 539px;
	display: grid;
	grid-template-columns: repeat(27, 29.4px);
	align-items: start;
	background: linear-gradient(#e7eaf2, #e7eaf2) 643px 0 / 582px 23px no-repeat;
	font-size: 13.5px;
	line-height: 26px;
	text-align: center;
	color: #454d5e;
}

.ruler svg {
	position: absolute;
	fill: #fff;
	stroke: #454d5e;
	stroke-width: 1;
}

.indent-left {
	left: 637px;
	top: 0;
	width: 12px;
	height: 32px;
}

.indent-right {
	left: 1219px;
	top: 0;
	width: 12px;
	height: 24px;
}

.ruler .tabstop {
	left: 4px;
	top: 11px;
	width: 8px;
	fill: none;
	stroke: #999;
}

.page {
	width: 834px;
	height: 730px;
	margin-left: 518px;
	padding: 75px 102px 0;
	background: #fff;
	box-shadow: 0 0 14px rgba(0, 0, 0, 0.16);
	color: #111;
	font-family: "Liberation Serif", "Noto Serif CJK SC", "Noto Sans CJK SC", serif;
	font-weight: 300;
}

/* crop marks at the edges of the text area */
.corners {
	display: flex;
	justify-content: space-between;
	width: 630px;
}

.corners i {
	width: 25px;
	height: 27px;
	border: solid #c4c4c4;
	border-width: 0 1px 1px 0;
}

.corners i:last-child {
	border-width: 0 0 1px 1px;
}

.page h1 {
	margin: 138px -20px 0 77px;
	font-size: 37px;
	line-height: 52px;
	font-weight: 300;
}

.cover {
	margin: 126px -20px 0 74px;
	font-size: 19.6px;
}

.cover p {
	margin: 0;
	height: 51.8px;
	display: flex;
	line-height: 28px;
}

.cover u {
	flex-shrink: 0;
	height: 24px;
	border-bottom: 1px solid #000;
	text-decoration: none;
}

.cover .topic {
	width: 433px;
	padding-left: 57px;
}

.w176 {
	width: 176px;
}

.w147 {
	width: 147px;
}

.w186 {
	width: 186px;
}

.w157 {
	width: 157px;
}

.w156 {
	width: 156px;
}

.w117 {
	width: 117px;
}

.w343 {
	width: 343px;
}

.scrollbar {
	width: 24px;
	display: flex;
	flex-direction: column;
	justify-content: space-between;
	padding: 57px 0 4px;
	background: #e9ebf0;
}

.thumb {
	width: 19px;
	height: 56px;
	margin-left: 1px;
	border-radius: 7px;
	background: #d5d7db;
}

.scrollbar svg {
	width: 24px;
	height: 100px;
}

.sidebar {
	width: 64px;
	display: flex;
	flex-direction: column;
	align-items: center;
	gap: 28px;
	padding: 53px 2px 0 0;
}

.rule {
	width: 48px;
	height: 1px;
	margin-top: 333px;
	background: #d6d9df;
}

/* status bar */
.statusbar {
	display: grid;
	grid-template-columns: 92px 15px 109px 126px 13px 29px 87px 19px 29px 672px 41px 11px 44px 38px 39px 40px 42px 16px 36px 44px 21px 39px 219px 37px 48px;
	align-items: center;
	height: 43px;
	padding-left: 14px;
	flex-shrink: 0;
	background: var(--canvas);
	border-top: 1px solid #dfe3e9;
	font-size: 18.3px;
}

.spell {
	display: flex;
	align-items: center;
	width: 120px;
	height: 36px;
	padding-left: 3px;
	gap: 2px;
	background: #edf1fa;
}

.spell .arrow {
	margin-left: 5px;
}

.statusbar .icon {
	transform: scale(0.92);
}

.zoom {
	color: #59617a;
}

.slider {
	width: 208px;
	display: flex;
	align-items: center;
	height: 20px;
	padding-left: 58px;
	background: linear-gradient(90deg, #4a4f5b 60px, #dadce0 60px) 0 9px / 100% 2px no-repeat;
}

.slider i {
	width: 19px;
	height: 19px;
	border-radius: 50%;
	border: 2px solid #5c606a;
	background: #f3f3f3;
}

/* taskbar */
.taskbar {
	display: grid;
	grid-template-columns: 75px 56px 285px 42px 76px 62px 75px 69px 222px 39px 96px 35px 35px 37px 36px 37px 35px 36px 35px 37px 36px 36px 37px 34px 37px 35px 43px 47px 123px 46px 7px;
	align-items: center;
	height: 60px;
	padding-left: 19px;
	flex-shrink: 0;
	background: linear-gradient(90deg, #242f3e, #263344 65%, #232527 83%, #222);
	color: #fff;
}

.app {
	width: 34px;
	height: 40px;
}

.wps-app {
	width: 38px;
	height: 28px;
}

.tray {
	width: 26px;
	height: 28px;
}

.tray.line {
	fill: none;
	stroke: #e8e8e8;
	stroke-width: 1.6;
}

.taskbar .search {
	width: 275px;
	height: 43px;
	display: flex;
	align-items: center;
	background: #f0f0f0;
	color: #111;
	font-size: 15px;
}

.search svg {
	width: 26px;
	margin: 0 3px 0 7px;
}

.search .arrow {
	width: 6px;
}

.search span {
	margin-left: 8px;
}

.search button {
	margin-left: auto;
	width: 70px;
	height: 43px;
	padding: 0;
	border: 0;
	background: #1f86fb;
	color: #fff;
	font: inherit;
}

.handle {
	width: 6px;
	height: 36px;
	border: solid #4b5665;
	border-width: 0 1px;
}

.running {
	width: 61px;
	height: 60px;
	display: grid;
	place-items: center;
	border-bottom: 3px solid #76b9ed;
}

.running.current {
	width: 73px;
	background: #4e5965;
}

.ninja-app {
	width: 36px;
}

.weather {
	position: relative;
	height: 60px;
}

.weather span {
	position: absolute;
	left: 3px;
	top: 29px;
	line-height: 26px;
}

.weather span:nth-child(1) {
	left: 29px;
	top: 3px;
}

.weather span:nth-child(2) {
	left: 7px;
	top: 17px;
	font-size: 21px;
	z-index: 1;
}

.ime {
	width: 26px;
	text-align: center;
}

.clock {
	width: 100px;
	text-align: center;
	font-size: 17.5px;
	line-height: 25px;
	padding-bottom: 2px;
}

.notice {
	position: relative;
	width: 37px;
}

.notice svg {
	width: 26px;
	height: 26px;
}

.notice span {
	position: absolute;
	left: 17px;
	top: 13px;
	width: 20px;
	height: 20px;
	background: #df0b0b;
	text-align: center;
	font-size: 12px;
	line-height: 19px;
}

.edge {
	width: 1px;
	height: 60px;
	background: #6b6b6b;
}

/* dialog */
.dialog {
	position: absolute;
	left: 807px;
	top: 332px;
	width: 272px;
	height: 359px;
	border: 1px solid #666;
	background: #f0f0f0;
	box-shadow: 0 4px 16px rgba(0, 0, 0, 0.35);
	color: #000;
}

.dialog-title {
	display: flex;
	align-items: center;
	height: 36px;
	padding: 0 17px 2px 4px;
	background: #fff;
}

.dialog-title svg {
	width: 22px;
	height: 22px;
	margin-right: 6px;
}

.dialog-title .close {
	width: 15px;
	height: 15px;
	margin: 0 0 0 auto;
	fill: none;
	stroke: #111;
	stroke-width: 1.2;
}

.dialog-body {
	padding: 6px 6px 0;
}

.legend {
	display: flex;
	align-items: center;
	gap: 4px;
}

.legend::after {
	content: "";
	flex: 1;
	height: 1px;
	background: #a0a0a0;
}

.dialog dl {
	display: grid;
	grid-template-columns: auto auto;
	margin: 4px 10px 0 9px;
	line-height: 27px;
}

.dialog dd {
	margin: 0;
	text-align: right;
	font-size: 19px;
}

.option {
	display: flex;
	align-items: center;
	gap: 8px;
	margin: 10px 0 0 3px;
}

.option i {
	width: 19px;
	height: 19px;
	border: 1px solid #333;
	background: #fff;
}

.dialog-foot {
	display: flex;
	align-items: center;
	margin: 8px 2px 0 6px;
}

.dialog-foot svg {
	width: 22px;
	margin-right: 8px;
}

.dialog-foot a {
	color: #5b95ee;
}

.dialog-foot button {
	margin-left: auto;
	width: 116px;
	height: 43px;
	border: 2px solid #0078d7;
	background: #e1e1e1;
	color: #000;
	font: inherit;
}

.cursor {
	position: absolute;
	left: 865px;
	top: 447px;
	width: 13px;
	height: 20px;
}

/* floating widgets */
.battery {
	position: absolute;
	left: 3px;
	top: 9px;
	width: 12px;
	height: 86px;
	border-radius: 6px;
	background: linear-gradient(#253460 36px, #5b5b5b 36px);
	box-shadow: 0 0 3px rgba(0, 0, 0, 0.4);
	display: flex;
	align-items: flex-end;
	overflow: hidden;
}

.battery i {
	width: 12px;
	height: 14px;
	background: repeating-linear-gradient(#5fc062 0 2px, #36703a 2px 4px);
}

.monitor {
	position: absolute;
	left: 1741px;
	top: 173px;
	width: 177px;
	height: 89px;
	display: flex;
	align-items: center;
}

.speeds {
	width: 130px;
	height: 63px;
	padding-left: 16px;
	border-radius: 30px 0 0 30px;
	background: #343641;
	color: #868996;
	box-shadow: 0 2px 8px rgba(0, 0, 0, 0.35);
	font-size: 16.5px;
	line-height: 32px;
}

.speeds div {
	display: flex;
	align-items: center;
	height: 32px;
}

.speeds svg {
	width: 10px;
	height: 10px;
	margin-right: 9px;
}

.speeds .up {
	fill: #29a7e0;
}

.speeds .down {
	fill: #26b04a;
}

.speeds b {
	color: #e2e3e7;
}

.usage {
	position: relative;
	width: 88px;
	height: 89px;
	margin-left: -40px;
	border-radius: 50%;
	background: linear-gradient(#505563, #454853);
	box-shadow: 0 1px 7px rgba(0, 0, 0, 0.5);
	color: #e3e5e9;
	display: flex;
	align-items: baseline;
	justify-content: center;
	font-family: "Open Sans", sans-serif;
	font-weight: 300;
	font-size: 38px;
	line-height: 86px;
}

.usage small {
	font-size: 17px;
	font-weight: 400;
}

.usage svg {
	position: absolute;
	inset: 0;
	fill: none;
	stroke-width: 2.5;
}
```
